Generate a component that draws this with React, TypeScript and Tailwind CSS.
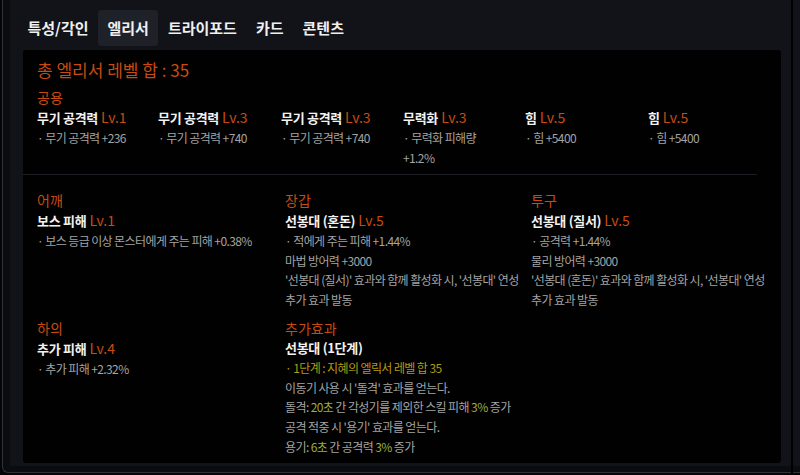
import React from 'react';

const KR = { fontFamily: '"Noto Sans CJK KR", "Noto Sans", sans-serif' };

type Item = { name: string; lv: string; lines: React.ReactNode[] };

const common: Item[] = [
  { name: '무기 공격력', lv: 'Lv.1', lines: ['· 무기 공격력 +236'] },
  { name: '무기 공격력', lv: 'Lv.3', lines: ['· 무기 공격력 +740'] },
  { name: '무기 공격력', lv: 'Lv.3', lines: ['· 무기 공격력 +740'] },
  { name: '무력화', lv: 'Lv.3', lines: ['· 무력화 피해량', '+1.2%'] },
  { name: '힘', lv: 'Lv.5', lines: ['· 힘 +5400'] },
  { name: '힘', lv: 'Lv.5', lines: ['· 힘 +5400'] },
];

const Green = ({ children }: { children: React.ReactNode }) => (
  <span className="text-[#9aae3c]">{children}</span>
);

const Title = ({ name, lv }: { name: string; lv?: string }) => (
  <div className="text-[13px] leading-[20px] font-bold text-[#f2f2f2] tracking-[-0.3px] whitespace-nowrap">
    {name}
    {lv && <span className="font-normal text-[14px] tracking-normal text-[#c84b11]"> {lv}</span>}
  </div>
);

const Block = ({ part, name, lv, lines }: { part: string; name: string; lv?: string; lines: React.ReactNode[] }) => (
  <div className="flex flex-col">
    <div className="text-[14px] leading-[20px] text-[#c84b11]">{part}</div>
    <Title name={name} lv={lv} />
    {lines.map((l, i) => (
      <div key={i} className="text-[12px] leading-[19.7px] text-[#a3a3a3] tracking-[-0.6px] whitespace-nowrap">
        {l}
      </div>
    ))}
  </div>
);

export default function App() {
  const tabs = ['특성/각인', '엘리서', '트라이포드', '카드', '콘텐츠'];
  return (
    <div className="w-[800px] h-[475px] bg-[#050507] overflow-hidden" style={KR}>
      <div className="ml-[2px] h-[473px] flex border-l border-b border-[#2f3038] rounded-bl-[6px] bg-[#0b0c10]">
        <div className="ml-[7px] w-[781px] h-[466px] bg-[#121318] flex flex-col">
          {/* tabs */}
          <div className="flex pl-[8px] pt-[10px]">
            {tabs.map((t) => (
              <div
                key={t}
                className={
                  'h-[36px] px-[9.5px] flex items-center text-[15px] font-bold text-[#f0f0f0] rounded-[4px] ' +
                  (t === '엘리서' ? 'bg-[#1f2128]' : '')
                }
              >
                {t}
              </div>
            ))}
          </div>

          {/* card */}
          <div className="ml-[13px] mt-[4px] w-[758px] h-[413px] bg-[#010101] rounded-[3px] pt-[10px]">
            <div className="pl-[14px] text-[17px] leading-[20px] text-[#c84b11]">총 엘리서 레벨 합 : 35</div>

            <div className="mt-[7px] mr-[24px] border-b border-[#1d1e23] pl-[14px] pb-[7px]">
              <div className="text-[14px] leading-[20px] text-[#c84b11]">공용</div>
              <div className="grid grid-cols-[121px_123px_122px_122px_123px_122px]">
                {common.map((c, i) => (
                  <div key={i} className="flex flex-col">
                    <Title name={c.name} lv={c.lv} />
                    {c.lines.map((l, j) => (
                      <div key={j} className="text-[12px] leading-[19.5px] text-[#a3a3a3] tracking-[-0.6px] whitespace-nowrap">
                        {l}
                      </div>
                    ))}
                  </div>
                ))}
              </div>
            </div>

            <div className="pl-[14px] pt-[15px] grid grid-cols-[248px_246px_1fr] gap-y-[8px]">
              <Block part="어깨" name="보스 피해" lv="Lv.1" lines={['· 보스 등급 이상 몬스터에게 주는 피해 +0.38%']} />
              <Block
                part="장갑"
                name="선봉대 (혼돈)"
                lv="Lv.5"
                lines={['· 적에게 주는 피해 +1.44%', '마법 방어력 +3000', "'선봉대 (질서)' 효과와 함께 활성화 시, '선봉대' 연성", '추가 효과 발동']}
              />
              <Block
                part="투구"
                name="선봉대 (질서)"
                lv="Lv.5"
                lines={['· 공격력 +1.44%', '물리 방어력 +3000', "'선봉대 (혼돈)' 효과와 함께 활성화 시, '선봉대' 연성", '추가 효과 발동']}
              />
              <Block part="하의" name="추가 피해" lv="Lv.4" lines={['· 추가 피해 +2.32%']} />
              <Block
                part="추가효과"
                name="선봉대 (1단계)"
                lines={[
                  <span className="text-[#b39a12]">· 1단계 : 지혜의 엘릭서 레벨 합 35</span>,
                  "이동기 사용 시 '돌격' 효과를 얻는다.",
                  <>
                    돌격: <Green>20초</Green> 간 각성기를 제외한 스킬 피해 <Green>3%</Green> 증가
                  </>,
                  "공격 적중 시 '용기' 효과를 얻는다.",
                  <>
                    용기: <Green>6초</Green> 간 공격력 <Green>3%</Green> 증가
                  </>,
                ]}
              />
            </div>
          </div>
        </div>
        <div className="w-[2px] h-[473px] bg-[#000]" />
        <div className="flex-1 h-[466px] bg-[#121318]" />
      </div>
    </div>
  );
}
